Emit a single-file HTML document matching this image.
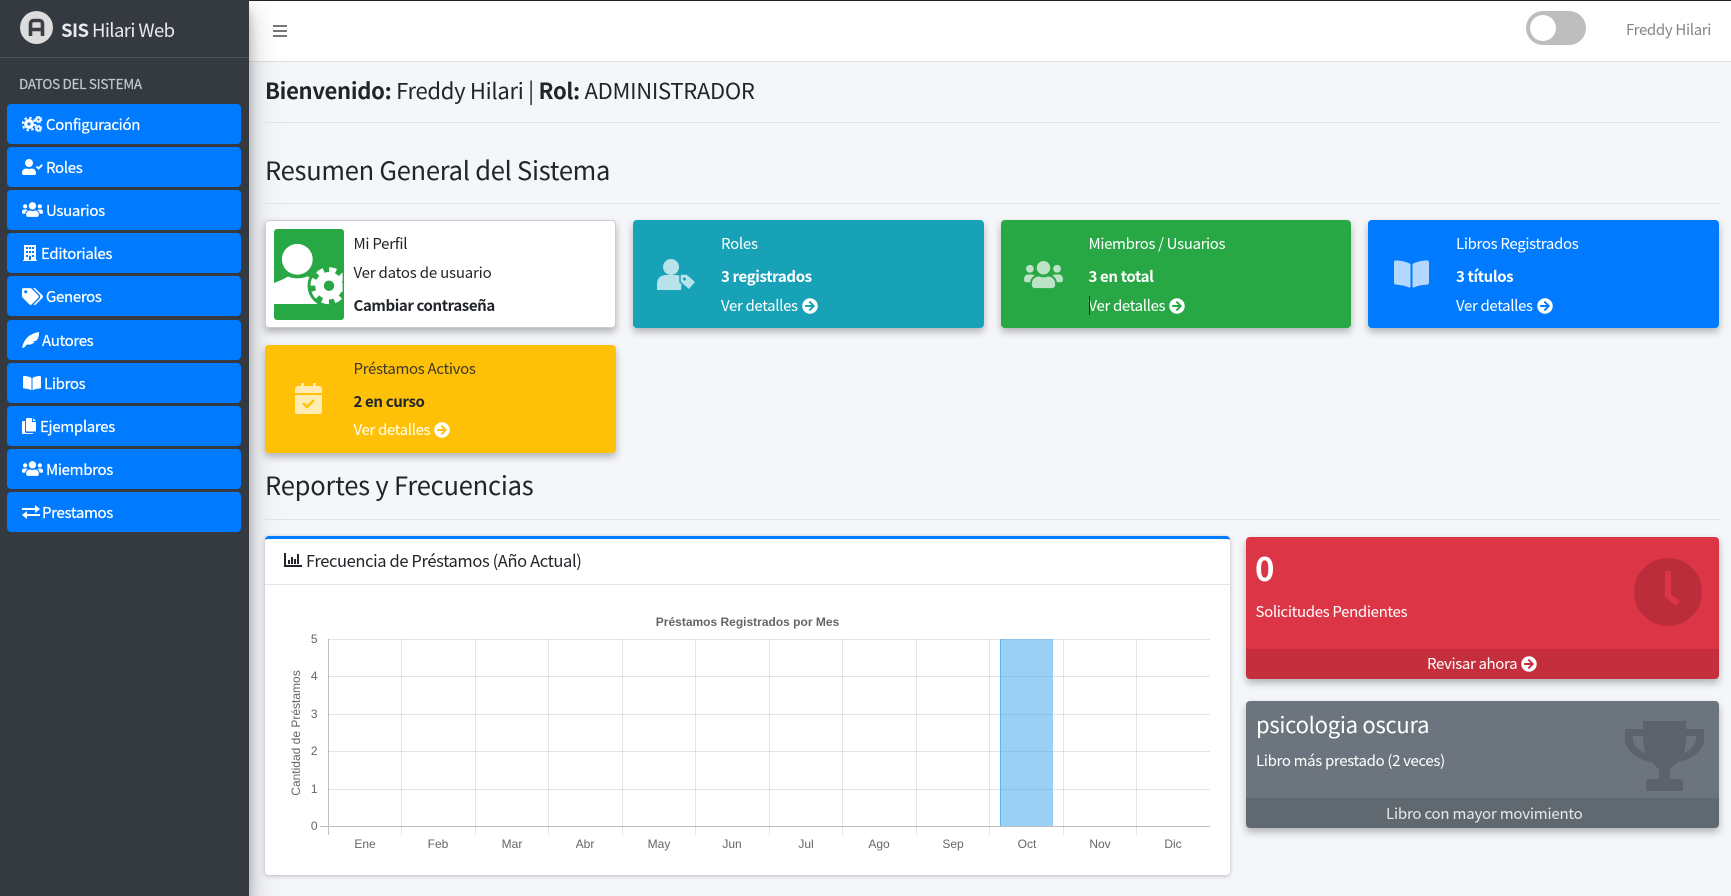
<!DOCTYPE html>
<html lang="es">
<head>
<meta charset="utf-8">
<title>SIS Hilari Web</title>
<style>
*{box-sizing:border-box}
html,body{margin:0;padding:0}
body{width:1731px;height:896px;overflow:hidden;position:relative;background:#f4f6f9;font-family:"Noto Sans CJK SC","Liberation Sans",sans-serif;font-size:15px;color:#212529;letter-spacing:-.27px}
.t{position:absolute;white-space:nowrap;line-height:20px;height:20px}
.b{font-weight:700;letter-spacing:-.36px}
.w{color:#fff}
.v{letter-spacing:-.35px}
.box{position:absolute}
.card{position:absolute;border-radius:4px;box-shadow:0 4px 8px rgba(0,0,0,.28)}
.nav{position:absolute;left:7px;width:234px;height:40px;background:#007bff;border-radius:4px}
.nav .t{color:#fff;top:11px;letter-spacing:-.32px;-webkit-text-stroke:.2px #fff}
.nav svg{position:absolute;fill:#fff}
hr{position:absolute;left:265px;width:1454px;margin:0;border:0;border-top:1px solid #dee1e5;height:0}
svg.i{position:absolute}
.ft{position:absolute;left:0;right:0;bottom:0;height:30px;background:rgba(0,0,0,.1);border-radius:0 0 4px 4px}
</style>
</head>
<body>
<svg width="0" height="0" style="position:absolute">
<defs>
<symbol id="arrow" viewBox="0 0 512 512"><path d="M256 8c137 0 248 111 248 248S393 504 256 504 8 393 8 256 119 8 256 8zm-28.900 143.600l75.500 72.400H120c-13.300 0-24 10.700-24 24v16c0 13.300 10.700 24 24 24h182.600l-75.500 72.400c-9.700 9.300-9.900 24.800-.4 34.300l11 10.900c9.400 9.400 24.600 9.400 33.900 0L404.300 273c9.400-9.400 9.400-24.600 0-33.900L271.600 106.300c-9.400-9.400-24.600-9.400-33.900 0l-11 10.900c-9.500 9.600-9.300 25.100.4 34.400z"/></symbol>
<symbol id="users" viewBox="0 0 640 512"><path d="M96 224c35.300 0 64-28.700 64-64s-28.700-64-64-64-64 28.700-64 64 28.700 64 64 64zm448 0c35.300 0 64-28.700 64-64s-28.700-64-64-64-64 28.700-64 64 28.700 64 64 64zm32 32h-64c-17.600 0-33.500 7.100-45.100 18.600 40.300 22.100 68.900 62 75.100 109.400h66c17.700 0 32-14.300 32-32v-32c0-35.300-28.700-64-64-64zm-256 0c61.900 0 112-50.100 112-112S381.900 32 320 32 208 82.100 208 144s50.100 112 112 112zm76.800 32h-8.300c-20.800 10-43.900 16-68.500 16s-47.600-6-68.500-16h-8.300C179.600 288 128 339.600 128 403.200V432c0 26.500 21.500 48 48 48h288c26.500 0 48-21.500 48-48v-28.800c0-63.600-51.600-115.200-115.200-115.200zm-223.700-13.400C161.500 263.100 145.600 256 128 256H64c-35.300 0-64 28.700-64 64v32c0 17.700 14.300 32 32 32h65.900c6.300-47.400 34.900-87.300 75.200-109.400z"/></symbol>
<symbol id="book" viewBox="0 0 576 512"><path d="M542.220 32.050c-54.800 3.110-163.720 14.430-230.960 55.590-4.640 2.840-7.270 7.890-7.270 13.170v363.870c0 11.550 12.630 18.850 23.280 13.490 69.180-34.820 169.230-44.320 218.700-46.920 16.890-.89 30.020-14.430 30.020-30.660V62.750c.01-17.710-15.350-31.740-33.770-30.700zM264.730 87.640C197.500 46.480 88.580 35.170 33.780 32.050 15.360 31.010 0 45.040 0 62.750V400.600c0 16.240 13.130 29.780 30.020 30.660 49.490 2.600 149.590 12.110 218.770 46.950 10.620 5.350 23.210-1.940 23.210-13.460V100.630c0-5.290-2.620-10.140-7.270-12.990z"/></symbol>
<symbol id="tags" viewBox="0 0 640 512"><path d="M497.941 225.941L286.059 14.059A48 48 0 0 0 252.118 0H48C21.490 0 0 21.490 0 48v204.118a48 48 0 0 0 14.059 33.941l211.882 211.882c18.744 18.745 49.136 18.746 67.882 0l204.118-204.118c18.745-18.745 18.745-49.137 0-67.882zM112 160c-26.510 0-48-21.490-48-48s21.490-48 48-48 48 21.490 48 48-21.490 48-48 48zm513.941 133.823L421.823 497.941c-18.745 18.745-49.137 18.745-67.882 0l-.36-.36L527.640 323.522c16.999-16.999 26.360-39.600 26.360-63.640s-9.362-46.641-26.360-63.640L331.397 0h48.721a48 48 0 0 1 33.941 14.059l211.882 211.882c18.745 18.745 18.745 49.137 0 67.882z"/></symbol>
<symbol id="userbase" viewBox="0 0 640 512"><circle cx="224" cy="128" r="128"/><path d="M313.600 304h-16.700c-22.200 10.200-46.900 16-72.900 16s-50.600-5.800-72.900-16h-16.700C60.200 304 0 364.200 0 438.400V464c0 26.500 21.500 48 48 48h352c26.500 0 48-21.500 48-48v-25.600c0-74.200-60.200-134.400-134.400-134.400z"/></symbol>
</defs>
</svg>

<!-- top navbar -->
<div class="box" style="left:249px;top:0;width:1482px;height:62px;background:#fff;border-bottom:1px solid #dee2e6;border-top:1px solid #222"></div>
<svg class="i" style="left:273px;top:24px" width="14" height="13" fill="#777"><rect y="1" width="14" height="2"/><rect y="6" width="14" height="2"/><rect y="11" width="14" height="2"/></svg>
<div class="box" style="left:1526px;top:11px;width:60px;height:34px;border-radius:17px;background:#bdbdbd"></div>
<div class="box" style="left:1530px;top:15px;width:26px;height:26px;border-radius:50%;background:#fff"></div>
<div class="t" style="left:1626px;top:20px;color:#868686;font-size:15px;letter-spacing:-.33px">Freddy Hilari</div>

<!-- sidebar -->
<div class="box" style="left:0;top:0;width:249px;height:896px;background:#343a40;box-shadow:0 14px 28px rgba(0,0,0,.25),0 10px 10px rgba(0,0,0,.22)"></div>
<div class="box" style="left:0;top:57px;width:249px;height:1px;background:#4b545c"></div>
<svg class="i" style="left:20px;top:11px;overflow:visible" width="33" height="33"><circle cx="16.500" cy="16.500" r="16.500" fill="#dcdcdc"/><path d="M10.500 25V12.500a3 3 0 0 1 3-3h6a3 3 0 0 1 3 3V25M10.500 18.500h12" fill="none" stroke="#3b3f44" stroke-width="3.600"/></svg>
<div class="t" style="left:61px;top:20px;font-size:18.500px;color:#e6e9ec;height:20px;letter-spacing:-.6px"><span style="font-weight:700;letter-spacing:-.6px">SIS</span> <span style="font-weight:400">Hilari Web</span></div>
<div class="t" style="left:19px;top:73px;font-size:13.500px;color:#c2c7d0;letter-spacing:-.3px;-webkit-text-stroke:.2px #c2c7d0">DATOS DEL SISTEMA</div>

<div class="nav" style="top:104px"><svg style="left:15px;top:12px" width="21" height="16" viewBox="0 0 21 16"><g fill="none" stroke="#fff"><circle cx="7" cy="8" r="3.300" stroke-width="3.400"/><circle cx="7" cy="8" r="6.300" stroke-width="2" stroke-dasharray="2.500 2.450"/><circle cx="16.500" cy="3.500" r="2" stroke-width="1.800"/><circle cx="16.500" cy="12.500" r="2" stroke-width="1.800"/><circle cx="16.500" cy="3.500" r="3.300" stroke-width="1" stroke-dasharray="1.500 1.100"/><circle cx="16.500" cy="12.500" r="3.300" stroke-width="1" stroke-dasharray="1.500 1.100"/></g></svg><div class="t" style="left:39px">Configuración</div></div>
<div class="nav" style="top:147px"><svg style="left:15px;top:12px" width="21" height="16" viewBox="0 0 21 16"><use href="#userbase" x="0" y="0" width="20" height="16"/><path d="M14.500 7.500l2 2 3.700-3.700" fill="none" stroke="#fff" stroke-width="1.900"/></svg><div class="t" style="left:39px">Roles</div></div>
<div class="nav" style="top:190px"><svg style="left:15px;top:11px" width="21" height="17"><use href="#users" width="21" height="17"/></svg><div class="t" style="left:39px">Usuarios</div></div>
<div class="nav" style="top:233px"><svg style="left:16px;top:12px" width="14" height="16" viewBox="0 0 14 16"><path fill-rule="evenodd" d="M1 0h12v15h1v1H0v-1h1zM3 2v2h2V2zm3 0v2h2V2zm3 0v2h2V2zM3 6v2h2V6zm3 0v2h2V6zm3 0v2h2V6zm-6 4v2h2v-2zm6 0v2h2v-2zM6 11v4h2v-4z"/></svg><div class="t" style="left:34px">Editoriales</div></div>
<div class="nav" style="top:276px"><svg style="left:15px;top:12px" width="21" height="17"><use href="#tags" width="21" height="17"/></svg><div class="t" style="left:39px">Generos</div></div>
<div class="nav" style="top:320px"><svg style="left:15px;top:12px" width="17" height="16" viewBox="0 0 17 16"><path d="M0 15.500C2 8 6 2 17 0c.300 4-1 7-3 9h-3l1.500 1c-1.500 2-4 3-7.500 2.500L2 15.800z"/></svg><div class="t" style="left:35px">Autores</div></div>
<div class="nav" style="top:363px"><svg style="left:15px;top:12px" width="20" height="16"><use href="#book" width="20" height="16"/></svg><div class="t" style="left:37px">Libros</div></div>
<div class="nav" style="top:406px"><svg style="left:15px;top:12px" width="15" height="16" viewBox="0 0 15 16"><path d="M5 0h5v4h4v8.500a1 1 0 0 1-1 1H5a1 1 0 0 1-1-1V1a1 1 0 0 1 1-1zM11 0l3 3h-3zM3 3v10.500A1.500 1.500 0 0 0 4.500 15H11v.500a.500.500 0 0 1-.500.500H1a1 1 0 0 1-1-1V4a1 1 0 0 1 1-1z"/></svg><div class="t" style="left:33px">Ejemplares</div></div>
<div class="nav" style="top:449px"><svg style="left:15px;top:11px" width="21" height="17"><use href="#users" width="21" height="17"/></svg><div class="t" style="left:39px">Miembros</div></div>
<div class="nav" style="top:492px"><svg style="left:15px;top:13px" width="18" height="14" viewBox="0 0 18 14"><path d="M0 3h13V0l5 4-5 4V5H0zM18 9H5V6l-5 4 5 4v-3h13z"/></svg><div class="t" style="left:35px">Prestamos</div></div>

<!-- headings -->
<div class="t" style="left:265px;top:80px;font-size:22px;letter-spacing:-.28px"><span class="b" style="letter-spacing:-.3px">Bienvenido:</span> Freddy Hilari | <span class="b" style="letter-spacing:-.3px">Rol:</span> ADMINISTRADOR</div>
<hr style="top:122px">
<div class="t" style="left:265px;top:160px;font-size:25.500px;letter-spacing:-.26px">Resumen General del Sistema</div>
<hr style="top:203px">

<!-- Mi Perfil -->
<div class="card" style="left:265px;top:220px;width:351px;height:108px;background:#fff;border:1px solid #c9ccd0"></div>
<svg class="i" style="left:274px;top:229px" width="70" height="91" viewBox="0 0 70 91">
<defs><clipPath id="cp"><rect width="70" height="91" rx="3"/></clipPath></defs>
<g clip-path="url(#cp)"><rect width="70" height="91" fill="#28a745"/>
<circle cx="23.300" cy="30.300" r="15.400" fill="#fff"/>
<path d="M0 54C5 52 10 50 14 47.500 20 50 27 50 33 47.500L48 50V75H0z" fill="#fff"/>
<circle cx="55" cy="56.700" r="21.500" fill="#28a745"/>
<circle cx="55" cy="56.700" r="9.500" fill="none" stroke="#fff" stroke-width="8.500"/>
<circle cx="55" cy="56.700" r="15.500" fill="none" stroke="#fff" stroke-width="6" stroke-dasharray="6.800 5.380"/>
<rect x="68.600" y="40" width="2" height="34" fill="#28a745"/>
</g></svg>
<div class="t" style="left:353.500px;top:234px">Mi Perfil</div>
<div class="t" style="left:353.500px;top:263px;letter-spacing:-.2px">Ver datos de usuario</div>
<div class="t b" style="left:353.500px;top:296px;letter-spacing:-.4px">Cambiar contraseña</div>

<!-- Roles -->
<div class="card" style="left:633px;top:220px;width:351px;height:108px;background:#17a2b8"></div>
<svg class="i" style="left:657px;top:259px;fill:#b9e3ea" width="39" height="31" viewBox="0 0 39 31"><circle cx="14" cy="8" r="8"/><path d="M0 31v-6c0-6 4-9 9-9h10c2 0 5 1 6 2l-1 13z"/><path d="M23 15h7l9 8-7 8-9-8z" stroke="#17a2b8" stroke-width="1.500"/><circle cx="27.500" cy="20" r="1.500" fill="#17a2b8"/></svg>
<div class="t w" style="left:721px;top:234px">Roles</div>
<div class="t w b" style="left:721px;top:267px">3 registrados</div>
<div class="t w v" style="left:721px;top:296px">Ver detalles</div>
<svg class="i" style="left:802px;top:298px;fill:#fff" width="16" height="16"><use href="#arrow" width="16" height="16"/></svg>

<!-- Miembros -->
<div class="card" style="left:1001px;top:220px;width:350px;height:108px;background:#28a745"></div>
<svg class="i" style="left:1024px;top:259px;fill:#bde3c7" width="39" height="31"><use href="#users" width="39" height="31"/></svg>
<div class="t w" style="left:1088.500px;top:234px;letter-spacing:-.36px">Miembros / Usuarios</div>
<div class="t w b" style="left:1088.500px;top:267px;letter-spacing:-.36px">3 en total</div>
<div class="t w v" style="left:1088.500px;top:296px">Ver detalles</div>
<div class="box" style="left:1089px;top:296px;width:1px;height:19px;background:#16351f"></div>
<svg class="i" style="left:1169px;top:298px;fill:#fff" width="16" height="16"><use href="#arrow" width="16" height="16"/></svg>

<!-- Libros -->
<div class="card" style="left:1368px;top:220px;width:351px;height:108px;background:#007bff"></div>
<svg class="i" style="left:1394px;top:258px;fill:#b3d7ff" width="35" height="32"><use href="#book" width="35" height="32"/></svg>
<div class="t w" style="left:1456px;top:234px;letter-spacing:-.33px">Libros Registrados</div>
<div class="t w b" style="left:1456px;top:267px">3 títulos</div>
<div class="t w v" style="left:1456px;top:296px">Ver detalles</div>
<svg class="i" style="left:1537px;top:298px;fill:#fff" width="16" height="16"><use href="#arrow" width="16" height="16"/></svg>

<!-- Prestamos -->
<div class="card" style="left:265px;top:345px;width:351px;height:108px;background:#ffc107"></div>
<svg class="i" style="left:295px;top:383px" width="27" height="31" viewBox="0 0 27 31"><path fill="#ffecb5" d="M6 0h3v3h9V0h3v3h3a3 3 0 0 1 3 3v4H0V6a3 3 0 0 1 3-3h3zM0 12h27v17a2 2 0 0 1-2 2H2a2 2 0 0 1-2-2z"/><path d="M8 20l4 4 7-7" fill="none" stroke="#ffc107" stroke-width="2.500"/></svg>
<div class="t" style="left:353.500px;top:359px;color:#3a3a2a;letter-spacing:-.32px">Préstamos Activos</div>
<div class="t b" style="left:353.500px;top:392px">2 en curso</div>
<div class="t w v" style="left:353.500px;top:420px">Ver detalles</div>
<svg class="i" style="left:434px;top:422px;fill:#fff" width="16" height="16"><use href="#arrow" width="16" height="16"/></svg>

<div class="t" style="left:265px;top:475px;font-size:25.500px;letter-spacing:-.2px">Reportes y Frecuencias</div>
<hr style="top:519px">

<!-- chart card -->
<div class="card" style="left:265px;top:536px;width:965px;height:339px;background:#fff;border-top:3px solid #007bff;box-shadow:0 1px 4px rgba(0,0,0,.25)"></div>
<div class="box" style="left:265px;top:584px;width:965px;height:1px;background:#e3e5e8"></div>
<svg class="i" style="left:284px;top:553px" width="18" height="14" viewBox="0 0 18 14" fill="#212529"><path d="M0 0h2v12h16v2H0z"/><rect x="4" y="7" width="2" height="4"/><rect x="7" y="4" width="2" height="7"/><rect x="10" y="6" width="2" height="5"/><rect x="13" y="1" width="2" height="10"/></svg>
<div class="t" style="left:306px;top:550px;font-size:16.500px;letter-spacing:-.38px">Frecuencia de Préstamos (Año Actual)</div>

<svg class="i" style="left:265px;top:585px" width="965" height="290" viewBox="265 585 965 290" font-family="'Liberation Sans',Arial,sans-serif" font-size="12" fill="#666" letter-spacing="0">
<g stroke="#000" stroke-opacity=".1" stroke-width="1" shape-rendering="crispEdges">
<path d="M328 639.500H1210M328 676.500H1210M328 714.500H1210M328 751.500H1210M328 789.500H1210"/>
<path d="M401.500 639V835M475.500 639V835M548.500 639V835M622.500 639V835M695.500 639V835M769.500 639V835M842.500 639V835M916.500 639V835M989.500 639V835M1063.500 639V835M1136.500 639V835"/>
</g>
<g stroke="#000" stroke-opacity=".25" shape-rendering="crispEdges"><path d="M328.500 639V835M320 826.500H1210" /></g>
<rect x="1000" y="639" width="53" height="187" fill="#36a2eb" fill-opacity=".5"/>
<path d="M1000.500 639V826" stroke="#36a2eb" stroke-opacity=".6" fill="none"/>
<text x="747.500" y="626" text-anchor="middle" font-weight="700" fill="#666">Préstamos Registrados por Mes</text>
<g text-anchor="end"><text x="317.500" y="643">5</text><text x="317.500" y="680">4</text><text x="317.500" y="718">3</text><text x="317.500" y="755">2</text><text x="317.500" y="793">1</text><text x="317.500" y="830">0</text></g>
<text transform="translate(300 733) rotate(-90)" text-anchor="middle">Cantidad de Préstamos</text>
<g text-anchor="middle"><text x="365" y="848">Ene</text><text x="438" y="848">Feb</text><text x="512" y="848">Mar</text><text x="585" y="848">Abr</text><text x="659" y="848">May</text><text x="732" y="848">Jun</text><text x="806" y="848">Jul</text><text x="879" y="848">Ago</text><text x="953" y="848">Sep</text><text x="1027" y="848">Oct</text><text x="1100" y="848">Nov</text><text x="1173" y="848">Dic</text></g>
</svg>

<!-- red card -->
<div class="card" style="left:1246px;top:537px;width:473px;height:142px;background:#dc3545"><div class="ft"></div></div>
<svg class="i" style="left:1634px;top:558px" width="68" height="68" viewBox="0 0 68 68"><circle cx="34" cy="34" r="34" fill="#bb2d3b"/><path d="M31 13h6v23l9 7-3.500 5L31 39z" fill="#dc3545"/></svg>
<div class="t w b" style="left:1255px;top:557px;font-size:33px">0</div>
<div class="t w" style="left:1255.500px;top:602px;letter-spacing:-.34px">Solicitudes Pendientes</div>
<div class="t w" style="left:1427px;top:654px;letter-spacing:-.36px">Revisar ahora</div>
<svg class="i" style="left:1521px;top:656px;fill:#fff" width="16" height="16"><use href="#arrow" width="16" height="16"/></svg>

<!-- grey card -->
<div class="card" style="left:1246px;top:701px;width:473px;height:127px;background:#6c757d"><div class="ft"></div></div>
<svg class="i" style="left:1625px;top:721px" width="79" height="70" viewBox="0 0 79 70" fill="#5c636a"><path fill-rule="evenodd" d="M18 0h43v8h18v10c0 10-10 20-26 23-3 3-6 5-8 7v10h9c3 0 4 2 4 4v8H21v-8c0-2 1-4 4-4h9V48c-2-2-5-4-8-7C10 38 0 28 0 18V8h18zM8 15v3c0 5 5 11 12 14-1-5-2-11-2-17zm63 0H61c0 6-1 12-2 17 7-3 12-9 12-14z"/></svg>
<div class="t w" style="left:1256px;top:714px;font-size:22px;letter-spacing:-.27px">psicologia oscura</div>
<div class="t w" style="left:1256px;top:751px;letter-spacing:-.34px">Libro más prestado (2 veces)</div>
<div class="t" style="left:1386px;top:804px;letter-spacing:-.2px;color:rgba(255,255,255,.85)">Libro con mayor movimiento</div>
</body>
</html>
